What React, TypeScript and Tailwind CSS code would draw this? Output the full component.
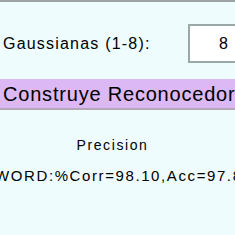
export default function App() {
  return (
    <div
      className="w-[235px] h-[235px] overflow-hidden bg-[#eefcfd] border-t-2 border-[#9ca3a3] text-black"
      style={{ fontFamily: '"Liberation Sans", Arial, sans-serif' }}
    >
      {/* Gaussianas row */}
      <div className="flex items-center h-[39px] mt-[22px]">
        <span className="flex-1 pl-[3px] text-[16px] tracking-[1.2px] whitespace-nowrap">Gaussianas (1-8):</span>
        <div className="shrink-0 w-[47px] h-[39px] bg-white border-y-2 border-l-2 border-[#9aa8a8] flex items-center justify-end pr-[7px] text-[16px]">
          8
        </div>
      </div>

      {/* Build button */}
      <div className="mt-[16px] h-[31px] bg-[#dcb8f4] border-b-2 border-[#b4a8b8] flex items-center pl-[3px] overflow-hidden">
        <span className="text-[20px] tracking-[0.8px] whitespace-nowrap">Construye Reconocedor</span>
      </div>

      {/* Results */}
      <div className="mt-[25px] pr-[10px] text-center text-[14px] tracking-[1.6px]">Precision</div>
      <div className="mt-[9px] flex overflow-hidden">
        <span className="-ml-[5px] text-[15px] tracking-[1.6px] whitespace-nowrap">WORD:%Corr=98.10,Acc=97.80</span>
      </div>
    </div>
  );
}
